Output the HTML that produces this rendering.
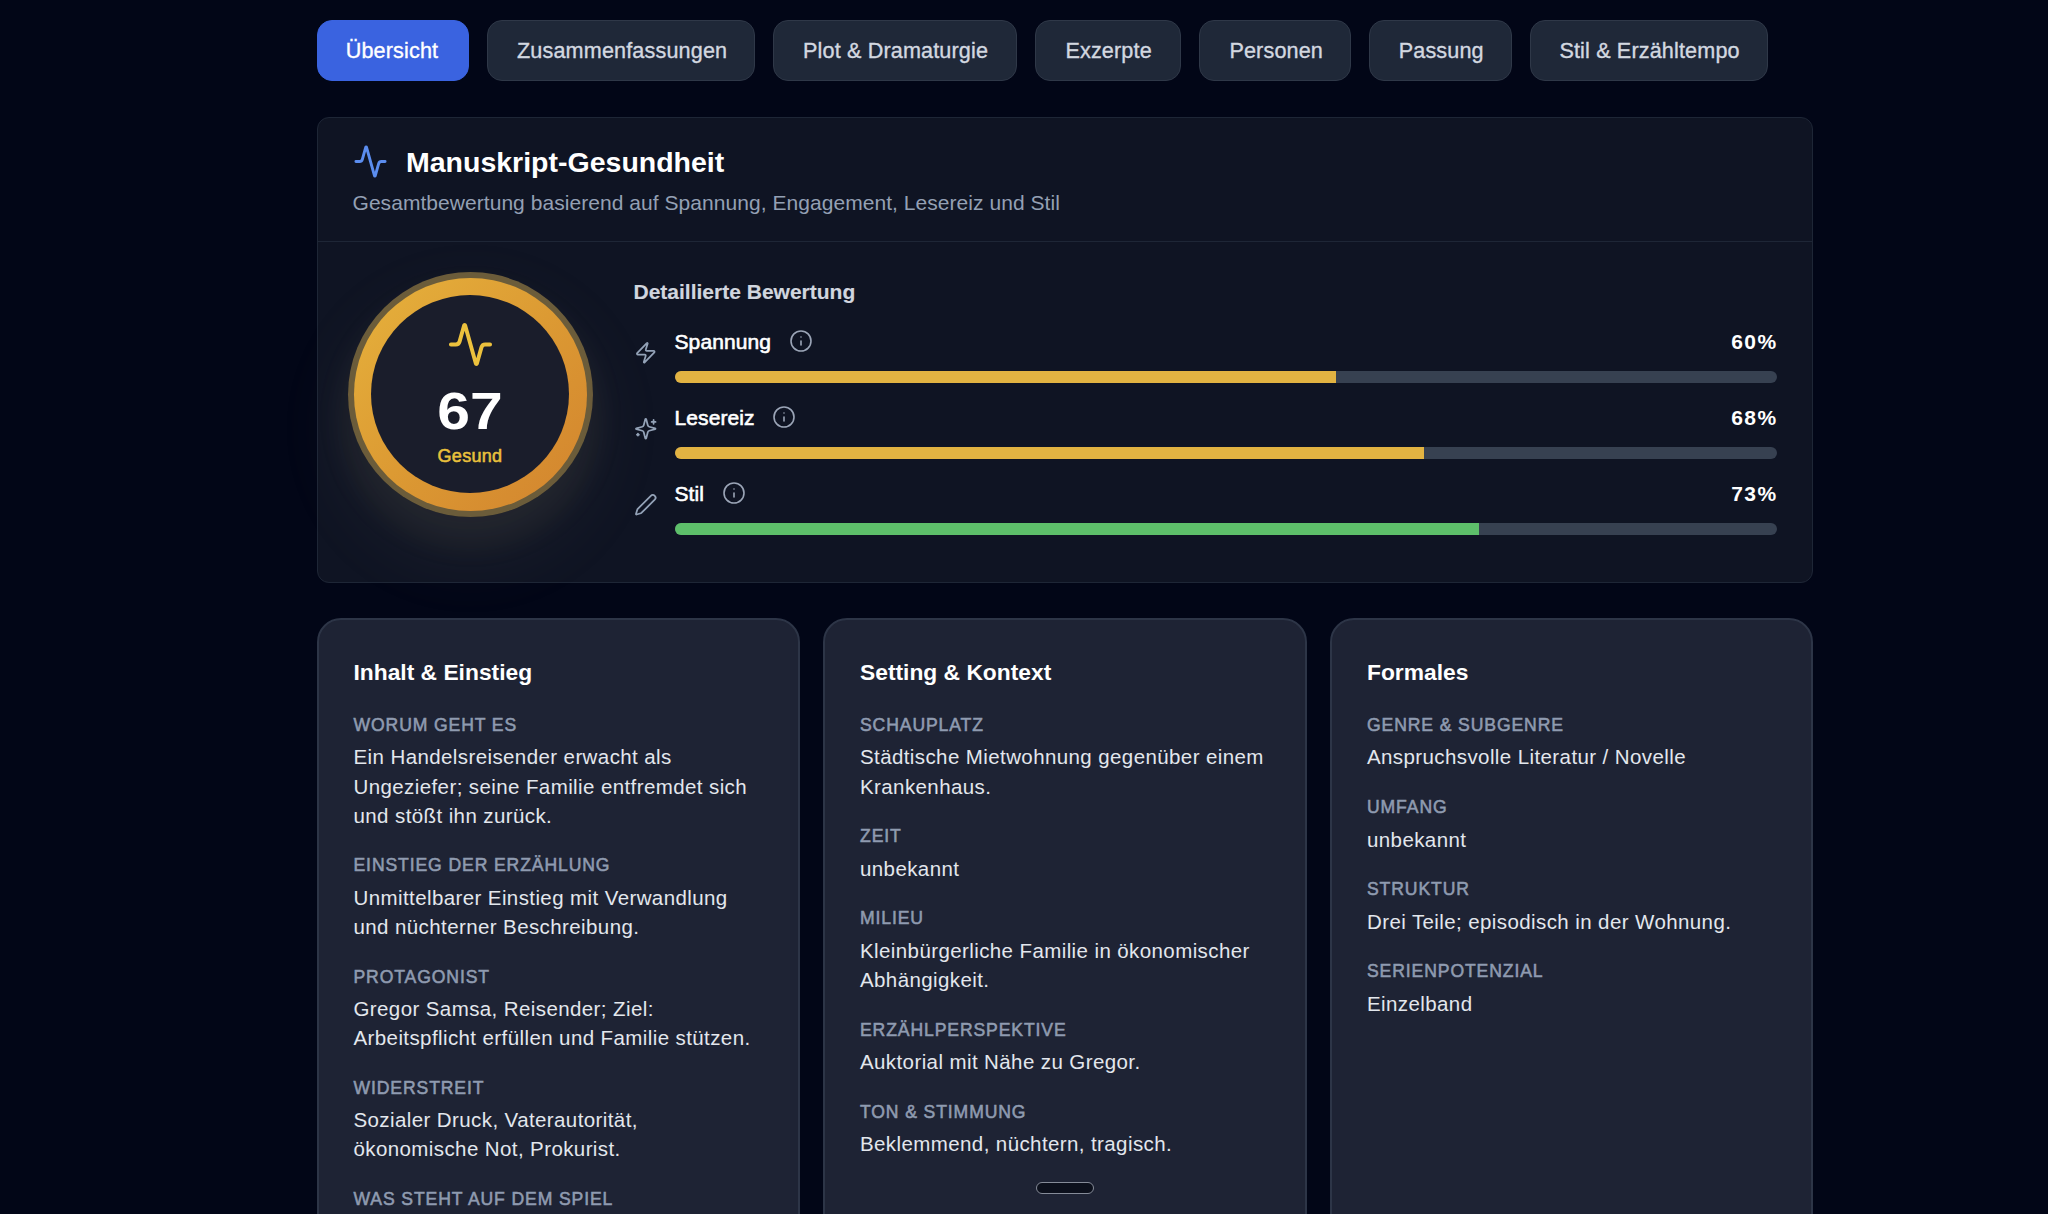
<!DOCTYPE html><html><head><meta charset="utf-8"><style>
*{margin:0;padding:0;box-sizing:border-box}
html,body{width:2048px;height:1214px;overflow:hidden;background:#020617;font-family:"Liberation Sans",sans-serif}
.t{position:absolute;white-space:nowrap}
.abs{position:absolute}
.tab{position:absolute;top:19.5px;height:61.5px;border-radius:15px;background:#1f2838;border:1.5px solid #2f3848}
.tab.on{background:#3a63e0;border-color:#3a63e0}
.card{position:absolute;background:#0f1423;border:1.5px solid #1e2636;border-radius:12px}
.bc{position:absolute;top:618px;height:700px;background:#1e2334;border:2px solid #2d3547;border-radius:24px}
.track{position:absolute;left:674.5px;width:1102.5px;height:12px;border-radius:6px;background:#374151;overflow:hidden}
.fill{position:absolute;left:0;top:0;height:12px}
</style></head><body>
<div class="tab on" style="left:316.5px;width:152.5px"></div>
<div class="t" style="left:345.7px;top:37.66px;font-size:21.6px;line-height:25.92px;color:#ffffff;font-weight:400;letter-spacing:0.15px;-webkit-text-stroke:0.35px currentColor">Übersicht</div>
<div class="tab" style="left:487px;width:268px"></div>
<div class="t" style="left:517px;top:37.66px;font-size:21.6px;line-height:25.92px;color:#d3d8e0;font-weight:400;letter-spacing:0.15px;-webkit-text-stroke:0.35px currentColor">Zusammenfassungen</div>
<div class="tab" style="left:773px;width:244px"></div>
<div class="t" style="left:803px;top:37.66px;font-size:21.6px;line-height:25.92px;color:#d3d8e0;font-weight:400;letter-spacing:0.15px;-webkit-text-stroke:0.35px currentColor">Plot &amp; Dramaturgie</div>
<div class="tab" style="left:1035px;width:146px"></div>
<div class="t" style="left:1065.4px;top:37.66px;font-size:21.6px;line-height:25.92px;color:#d3d8e0;font-weight:400;letter-spacing:0.15px;-webkit-text-stroke:0.35px currentColor">Exzerpte</div>
<div class="tab" style="left:1199px;width:152px"></div>
<div class="t" style="left:1229.4px;top:37.66px;font-size:21.6px;line-height:25.92px;color:#d3d8e0;font-weight:400;letter-spacing:0.15px;-webkit-text-stroke:0.35px currentColor">Personen</div>
<div class="tab" style="left:1369px;width:143px"></div>
<div class="t" style="left:1398.7px;top:37.66px;font-size:21.6px;line-height:25.92px;color:#d3d8e0;font-weight:400;letter-spacing:0.15px;-webkit-text-stroke:0.35px currentColor">Passung</div>
<div class="tab" style="left:1530px;width:238.4000000000001px"></div>
<div class="t" style="left:1559.4px;top:37.66px;font-size:21.6px;line-height:25.92px;color:#d3d8e0;font-weight:400;letter-spacing:0.15px;-webkit-text-stroke:0.35px currentColor">Stil &amp; Erzähltempo</div>
<div class="card" style="left:316.5px;top:116.5px;width:1496px;height:466px"></div>
<div class="abs" style="left:318px;top:240.5px;width:1494px;height:1.5px;background:#1e2636"></div>
<svg class="abs" style="left:353px;top:144px" width="35" height="35" viewBox="0 0 24 24" fill="none" stroke="#5b8def" stroke-width="2" stroke-linecap="round" stroke-linejoin="round"><path d="M22 12h-2.48a2 2 0 0 0-1.93 1.46l-2.35 8.36a.25.25 0 0 1-.48 0L9.24 2.18a.25.25 0 0 0-.48 0l-2.35 8.36A2 2 0 0 1 4.49 12H2"/></svg>
<div class="t" style="left:406px;top:145.32px;font-size:28.5px;line-height:34.2px;color:#ffffff;font-weight:700;letter-spacing:0px;">Manuskript-Gesundheit</div>
<div class="t" style="left:352.5px;top:189.82px;font-size:21px;line-height:25.2px;color:#94a0b4;font-weight:400;letter-spacing:0.05px;">Gesamtbewertung basierend auf Spannung, Engagement, Lesereiz und Stil</div>
<div class="abs" style="left:347.5px;top:271.5px;width:245px;height:245px;border-radius:50%;box-shadow:0 22px 30px 6px rgba(190,170,130,0.07), 0 34px 70px 14px rgba(180,165,130,0.06)"></div>
<div class="abs" style="left:347.5px;top:271.5px;width:245px;height:245px;border-radius:50%;background:#6b5c3a"></div>
<div class="abs" style="left:353.5px;top:277.5px;width:233px;height:233px;border-radius:50%;background:linear-gradient(135deg,#e6b23c 0%,#dc9a33 50%,#d2832e 100%)"></div>
<div class="abs" style="left:371px;top:295px;width:198px;height:198px;border-radius:50%;background:#1a1d2b"></div>
<svg class="abs" style="left:446.5px;top:321px" width="47" height="47" viewBox="0 0 24 24" fill="none" stroke="#ecc13d" stroke-width="2" stroke-linecap="round" stroke-linejoin="round"><path d="M22 12h-2.48a2 2 0 0 0-1.93 1.46l-2.35 8.36a.25.25 0 0 1-.48 0L9.24 2.18a.25.25 0 0 0-.48 0l-2.35 8.36A2 2 0 0 1 4.49 12H2"/></svg>
<div class="t" style="left:370px;top:378.71px;font-size:52.5px;line-height:63.0px;color:#ffffff;font-weight:700;letter-spacing:0px;width:200px;text-align:center;transform:scaleX(1.12)">67</div>
<div class="t" style="left:370px;top:445.96px;font-size:18px;line-height:21.6px;color:#e9c03c;font-weight:400;letter-spacing:0.3px;width:200px;text-align:center;-webkit-text-stroke:0.55px currentColor">Gesund</div>
<div class="t" style="left:633.5px;top:279.42px;font-size:21px;line-height:25.2px;color:#d1d6df;font-weight:700;letter-spacing:0px;-webkit-text-stroke:0.15px currentColor">Detaillierte Bewertung</div>
<svg class="abs" style="left:633.5px;top:341px" width="23.5" height="23.5" viewBox="0 0 24 24" fill="none" stroke="#94a3b8" stroke-width="1.8" stroke-linecap="round" stroke-linejoin="round"><path d="M4 14a1 1 0 0 1-.78-1.63l9.9-10.2a.5.5 0 0 1 .86.46l-1.92 6.02A1 1 0 0 0 13 10h7a1 1 0 0 1 .78 1.63l-9.9 10.2a.5.5 0 0 1-.86-.46l1.92-6.02A1 1 0 0 0 11 14z"/></svg>
<div class="t" style="left:674.5px;top:329.22px;font-size:21px;line-height:25.2px;color:#ffffff;font-weight:400;letter-spacing:0.1px;-webkit-text-stroke:0.6px currentColor">Spannung</div>
<svg class="abs" style="left:788.7px;top:329.1px" width="24" height="24" viewBox="0 0 24 24" fill="none" stroke="#9ba5b7" stroke-width="1.6" stroke-linecap="round" stroke-linejoin="round"><circle cx="12" cy="12" r="10"/><path d="M12 16v-4"/><path d="M12 8h.01"/></svg>
<div class="t" style="left:1577.5px;top:329.22px;font-size:21px;line-height:25.2px;color:#ffffff;font-weight:700;letter-spacing:1.4px;width:200px;text-align:right;margin-right:-1.4px">60%</div>
<div class="track" style="top:370.5px"><div class="fill" style="width:60.0%;background:#e2b342"></div></div>
<svg class="abs" style="left:633.5px;top:417px" width="23.5" height="23.5" viewBox="0 0 24 24" fill="none" stroke="#94a3b8" stroke-width="1.8" stroke-linecap="round" stroke-linejoin="round"><path d="M9.937 15.5A2 2 0 0 0 8.5 14.063l-6.135-1.582a.5.5 0 0 1 0-.962L8.5 9.936A2 2 0 0 0 9.937 8.5l1.582-6.135a.5.5 0 0 1 .963 0L14.063 8.5A2 2 0 0 0 15.5 9.937l6.135 1.581a.5.5 0 0 1 0 .964L15.5 14.063a2 2 0 0 0-1.437 1.437l-1.582 6.135a.5.5 0 0 1-.963 0z"/><path d="M20 3v4"/><path d="M22 5h-4"/><path d="M4 17v2"/><path d="M5 18H3"/></svg>
<div class="t" style="left:674.5px;top:405.42px;font-size:21px;line-height:25.2px;color:#ffffff;font-weight:400;letter-spacing:0.1px;-webkit-text-stroke:0.6px currentColor">Lesereiz</div>
<svg class="abs" style="left:771.9000000000001px;top:405.3px" width="24" height="24" viewBox="0 0 24 24" fill="none" stroke="#9ba5b7" stroke-width="1.6" stroke-linecap="round" stroke-linejoin="round"><circle cx="12" cy="12" r="10"/><path d="M12 16v-4"/><path d="M12 8h.01"/></svg>
<div class="t" style="left:1577.5px;top:405.42px;font-size:21px;line-height:25.2px;color:#ffffff;font-weight:700;letter-spacing:1.4px;width:200px;text-align:right;margin-right:-1.4px">68%</div>
<div class="track" style="top:446.7px"><div class="fill" style="width:68.0%;background:#e2b342"></div></div>
<svg class="abs" style="left:633.5px;top:493px" width="23.5" height="23.5" viewBox="0 0 24 24" fill="none" stroke="#94a3b8" stroke-width="1.8" stroke-linecap="round" stroke-linejoin="round"><path d="M21.174 6.812a1 1 0 0 0-3.986-3.987L3.842 16.174a2 2 0 0 0-.5.83l-1.321 4.352a.5.5 0 0 0 .623.622l4.353-1.32a2 2 0 0 0 .83-.497z"/></svg>
<div class="t" style="left:674.5px;top:481.42px;font-size:21px;line-height:25.2px;color:#ffffff;font-weight:400;letter-spacing:0.1px;-webkit-text-stroke:0.6px currentColor">Stil</div>
<svg class="abs" style="left:722.4000000000001px;top:481.3px" width="24" height="24" viewBox="0 0 24 24" fill="none" stroke="#9ba5b7" stroke-width="1.6" stroke-linecap="round" stroke-linejoin="round"><circle cx="12" cy="12" r="10"/><path d="M12 16v-4"/><path d="M12 8h.01"/></svg>
<div class="t" style="left:1577.5px;top:481.42px;font-size:21px;line-height:25.2px;color:#ffffff;font-weight:700;letter-spacing:1.4px;width:200px;text-align:right;margin-right:-1.4px">73%</div>
<div class="track" style="top:522.8px"><div class="fill" style="width:73.0%;background:#5dbf6a"></div></div>
<div class="bc" style="left:316.5px;width:483.0px"></div>
<div class="bc" style="left:823px;width:484.20000000000005px"></div>
<div class="bc" style="left:1329.8px;width:483.0px"></div>
<div class="t" style="left:353.5px;top:658.92px;font-size:22.8px;line-height:27.36px;color:#ffffff;font-weight:700;letter-spacing:0px;">Inhalt &amp; Einstieg</div>
<div class="t" style="left:353.5px;top:715.04px;font-size:17.6px;line-height:21.12px;color:#8f9bb0;font-weight:400;letter-spacing:0.88px;-webkit-text-stroke:0.55px currentColor">WORUM GEHT ES</div>
<div class="t" style="left:353.5px;top:742.45px;font-size:20.5px;line-height:29.1px;color:#e3e7ed;font-weight:400;letter-spacing:0.4px;">Ein Handelsreisender erwacht als<br>Ungeziefer; seine Familie entfremdet sich<br>und stößt ihn zurück.</div>
<div class="t" style="left:353.5px;top:855.34px;font-size:17.6px;line-height:21.12px;color:#8f9bb0;font-weight:400;letter-spacing:0.88px;-webkit-text-stroke:0.55px currentColor">EINSTIEG DER ERZÄHLUNG</div>
<div class="t" style="left:353.5px;top:882.75px;font-size:20.5px;line-height:29.1px;color:#e3e7ed;font-weight:400;letter-spacing:0.4px;">Unmittelbarer Einstieg mit Verwandlung<br>und nüchterner Beschreibung.</div>
<div class="t" style="left:353.5px;top:966.54px;font-size:17.6px;line-height:21.12px;color:#8f9bb0;font-weight:400;letter-spacing:0.88px;-webkit-text-stroke:0.55px currentColor">PROTAGONIST</div>
<div class="t" style="left:353.5px;top:993.95px;font-size:20.5px;line-height:29.1px;color:#e3e7ed;font-weight:400;letter-spacing:0.4px;">Gregor Samsa, Reisender; Ziel:<br>Arbeitspflicht erfüllen und Familie stützen.</div>
<div class="t" style="left:353.5px;top:1077.74px;font-size:17.6px;line-height:21.12px;color:#8f9bb0;font-weight:400;letter-spacing:0.88px;-webkit-text-stroke:0.55px currentColor">WIDERSTREIT</div>
<div class="t" style="left:353.5px;top:1105.15px;font-size:20.5px;line-height:29.1px;color:#e3e7ed;font-weight:400;letter-spacing:0.4px;">Sozialer Druck, Vaterautorität,<br>ökonomische Not, Prokurist.</div>
<div class="t" style="left:353.5px;top:1188.94px;font-size:17.6px;line-height:21.12px;color:#8f9bb0;font-weight:400;letter-spacing:0.88px;-webkit-text-stroke:0.55px currentColor">WAS STEHT AUF DEM SPIEL</div>
<div class="t" style="left:353.5px;top:1216.35px;font-size:20.5px;line-height:29.1px;color:#e3e7ed;font-weight:400;letter-spacing:0.4px;"></div>
<div class="t" style="left:860px;top:658.92px;font-size:22.8px;line-height:27.36px;color:#ffffff;font-weight:700;letter-spacing:0px;">Setting &amp; Kontext</div>
<div class="t" style="left:860px;top:715.04px;font-size:17.6px;line-height:21.12px;color:#8f9bb0;font-weight:400;letter-spacing:0.88px;-webkit-text-stroke:0.55px currentColor">SCHAUPLATZ</div>
<div class="t" style="left:860px;top:742.45px;font-size:20.5px;line-height:29.1px;color:#e3e7ed;font-weight:400;letter-spacing:0.4px;">Städtische Mietwohnung gegenüber einem<br>Krankenhaus.</div>
<div class="t" style="left:860px;top:826.24px;font-size:17.6px;line-height:21.12px;color:#8f9bb0;font-weight:400;letter-spacing:0.88px;-webkit-text-stroke:0.55px currentColor">ZEIT</div>
<div class="t" style="left:860px;top:853.65px;font-size:20.5px;line-height:29.1px;color:#e3e7ed;font-weight:400;letter-spacing:0.4px;">unbekannt</div>
<div class="t" style="left:860px;top:908.34px;font-size:17.6px;line-height:21.12px;color:#8f9bb0;font-weight:400;letter-spacing:0.88px;-webkit-text-stroke:0.55px currentColor">MILIEU</div>
<div class="t" style="left:860px;top:935.75px;font-size:20.5px;line-height:29.1px;color:#e3e7ed;font-weight:400;letter-spacing:0.4px;">Kleinbürgerliche Familie in ökonomischer<br>Abhängigkeit.</div>
<div class="t" style="left:860px;top:1019.54px;font-size:17.6px;line-height:21.12px;color:#8f9bb0;font-weight:400;letter-spacing:0.88px;-webkit-text-stroke:0.55px currentColor">ERZÄHLPERSPEKTIVE</div>
<div class="t" style="left:860px;top:1046.95px;font-size:20.5px;line-height:29.1px;color:#e3e7ed;font-weight:400;letter-spacing:0.4px;">Auktorial mit Nähe zu Gregor.</div>
<div class="t" style="left:860px;top:1101.64px;font-size:17.6px;line-height:21.12px;color:#8f9bb0;font-weight:400;letter-spacing:0.88px;-webkit-text-stroke:0.55px currentColor">TON &amp; STIMMUNG</div>
<div class="t" style="left:860px;top:1129.05px;font-size:20.5px;line-height:29.1px;color:#e3e7ed;font-weight:400;letter-spacing:0.4px;">Beklemmend, nüchtern, tragisch.</div>
<div class="t" style="left:1367px;top:658.92px;font-size:22.8px;line-height:27.36px;color:#ffffff;font-weight:700;letter-spacing:0px;">Formales</div>
<div class="t" style="left:1367px;top:715.04px;font-size:17.6px;line-height:21.12px;color:#8f9bb0;font-weight:400;letter-spacing:0.88px;-webkit-text-stroke:0.55px currentColor">GENRE &amp; SUBGENRE</div>
<div class="t" style="left:1367px;top:742.45px;font-size:20.5px;line-height:29.1px;color:#e3e7ed;font-weight:400;letter-spacing:0.4px;">Anspruchsvolle Literatur / Novelle</div>
<div class="t" style="left:1367px;top:797.14px;font-size:17.6px;line-height:21.12px;color:#8f9bb0;font-weight:400;letter-spacing:0.88px;-webkit-text-stroke:0.55px currentColor">UMFANG</div>
<div class="t" style="left:1367px;top:824.55px;font-size:20.5px;line-height:29.1px;color:#e3e7ed;font-weight:400;letter-spacing:0.4px;">unbekannt</div>
<div class="t" style="left:1367px;top:879.24px;font-size:17.6px;line-height:21.12px;color:#8f9bb0;font-weight:400;letter-spacing:0.88px;-webkit-text-stroke:0.55px currentColor">STRUKTUR</div>
<div class="t" style="left:1367px;top:906.65px;font-size:20.5px;line-height:29.1px;color:#e3e7ed;font-weight:400;letter-spacing:0.4px;">Drei Teile; episodisch in der Wohnung.</div>
<div class="t" style="left:1367px;top:961.34px;font-size:17.6px;line-height:21.12px;color:#8f9bb0;font-weight:400;letter-spacing:0.88px;-webkit-text-stroke:0.55px currentColor">SERIENPOTENZIAL</div>
<div class="t" style="left:1367px;top:988.75px;font-size:20.5px;line-height:29.1px;color:#e3e7ed;font-weight:400;letter-spacing:0.4px;">Einzelband</div>
<div class="abs" style="left:1035.5px;top:1181.5px;width:58.5px;height:12.2px;border-radius:6px;background:#0c101c;border:1.7px solid #858b98"></div>
</body></html>
